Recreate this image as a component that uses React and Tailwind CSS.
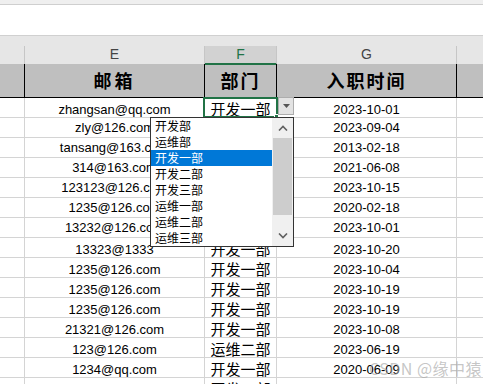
import React from 'react'

const rows = [
  ['zhangsan@qq.com', '开发一部', '2023-10-01'],
  ['zly@126.com', '', '2023-09-04'],
  ['tansang@163.com', '', '2013-02-18'],
  ['314@163.com', '', '2021-06-08'],
  ['123123@126.com', '', '2023-10-15'],
  ['1235@126.com', '', '2020-02-18'],
  ['13232@126.com', '', '2023-10-01'],
  ['13323@1333', '开发一部', '2023-10-20'],
  ['1235@126.com', '开发一部', '2023-10-04'],
  ['1235@126.com', '开发一部', '2023-10-19'],
  ['1235@126.com', '开发一部', '2023-10-19'],
  ['21321@126.com', '开发一部', '2023-10-08'],
  ['123@126.com', '运维二部', '2023-06-19'],
  ['1234@qq.com', '开发一部', '2020-06-09'],
  ['', '开发一部', ''],
]

const options = ['开发部', '运维部', '开发一部', '开发二部', '开发三部', '运维一部', '运维二部', '运维三部']

const grid = 'grid grid-cols-[25px_180px_72px_180px_1fr]'
const cjk = "font-['Noto_Sans_CJK_SC','Noto_Sans',sans-serif]"
const latin = "font-['Liberation_Sans','Noto_Sans_CJK_SC',sans-serif]"

export default function App() {
  return (
    <div className="relative h-[384px] w-[483px] overflow-hidden bg-white">
      {/* ribbon strip + formula bar */}
      <div className="h-[5px] border-b border-[#cfcfcf] bg-[#efefef]" />
      <div className="h-[31px] border-b border-[#d0d0d0] bg-white" />
      <div className="h-[10px] bg-[#e6e6e6]" />

      {/* column letters */}
      <div className={`${grid} h-[18px] bg-[#e6e6e6] text-[14px] leading-[17px] text-[#444] ${latin}`}>
        <div className="border-r border-[#c6c6c6]" />
        <div className="border-r border-[#c6c6c6] text-center">E</div>
        <div className="border-r border-[#c6c6c6] border-b-2 border-b-[#217346] bg-[#d2d2d2] text-center text-[#217346]">F</div>
        <div className="border-r border-[#c6c6c6] text-center">G</div>
        <div />
      </div>

      {/* header row */}
      <div className={`${grid} h-[34px] border-b border-black bg-[#bfbfbf] text-[18px] font-bold text-black ${cjk}`}>
        <div className="border-r border-black" />
        <div className="flex items-center justify-center border-r border-black tracking-[3px]">邮箱</div>
        <div className="flex items-center justify-center border-r border-black tracking-[2px]">部门</div>
        <div className="flex items-center justify-center border-r border-black tracking-[2px]">入职时间</div>
        <div />
      </div>

      {/* data */}
      {rows.map((r, i) => (
        <div key={i} className={`${grid} h-[20px] border-b border-[#d4d4d4] text-black`}>
          <div className="border-r border-[#d4d4d4]" />
          <div className={`flex items-center justify-center border-r border-[#d4d4d4] text-[13px] ${latin}`}>{r[0]}</div>
          <div className={`flex items-center justify-center border-r border-[#d4d4d4] text-[15px] ${cjk}`}>{r[1]}</div>
          <div className={`flex items-center justify-center border-r border-[#d4d4d4] text-[13px] ${latin}`}>{r[2]}</div>
          <div />
        </div>
      ))}

      {/* active cell */}
      <div className="absolute left-[203px] top-[97px] h-[21px] w-[75px] border-2 border-[#217346]">
        <div className="absolute -bottom-[3px] -right-[3px] h-[5px] w-[5px] border border-white bg-[#217346]" />
      </div>

      {/* dropdown button */}
      <div className="absolute left-[278px] top-[97px] flex h-[18px] w-[16px] items-center justify-center border border-[#adadad] bg-[#e3e3e3]">
        <svg width="7" height="4" viewBox="0 0 7 4">
          <path d="M0 0h7L3.5 4z" fill="#555" />
        </svg>
      </div>

      {/* validation list */}
      <div className={`absolute left-[150px] top-[117px] flex h-[130px] w-[144px] border border-[#333] bg-white text-[12px] ${cjk}`}>
        <div className="flex-1">
          {options.map((o, i) => (
            <div
              key={o}
              className={`h-[16px] pl-[4px] leading-[16px] ${i === 2 ? 'bg-[#0078d7] text-white' : 'text-black'}`}
            >
              {o}
            </div>
          ))}
        </div>
        <div className="flex w-[21px] flex-col bg-[#f0f0f0]">
          <div className="flex h-[20px] items-center justify-center">
            <svg width="10" height="6" viewBox="0 0 10 6">
              <path d="M1 5.5L5 1.5l4 4" fill="none" stroke="#606060" strokeWidth="1.6" />
            </svg>
          </div>
          <div className="mx-[1px] h-[77px] bg-[#cdcdcd]" />
          <div className="flex-1" />
          <div className="flex h-[20px] items-center justify-center">
            <svg width="10" height="6" viewBox="0 0 10 6">
              <path d="M1 0.5L5 4.5l4-4" fill="none" stroke="#606060" strokeWidth="1.6" />
            </svg>
          </div>
        </div>
      </div>

      {/* watermark */}
      <div className={`absolute left-[369px] top-[356px] text-[16px] tracking-[0.5px] text-[#a0a0a0]/60 ${cjk}`}>CSDN @缘中猿</div>
    </div>
  )
}
